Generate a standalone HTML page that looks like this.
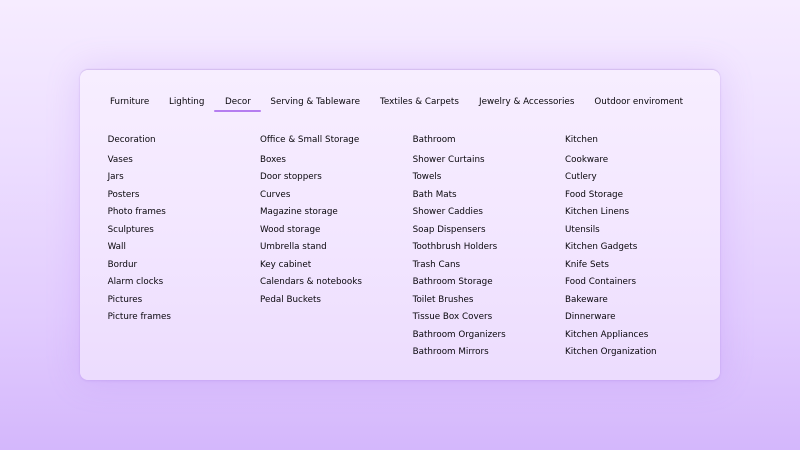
<!DOCTYPE html>
<html><head><meta charset="utf-8">
<style>
html,body{margin:0;padding:0}
body{width:800px;height:450px;overflow:hidden;position:relative;background:linear-gradient(180deg,#f6ecff 0%,#eee0ff 30%,#e2ccfe 70%,#d4b7fc 100%);font-family:"DejaVu Sans",sans-serif;font-size:8.75px;color:#08060b}
.card{position:absolute;left:80px;top:70px;width:640px;height:310px;box-sizing:border-box;border-radius:8px;background:linear-gradient(180deg,#f7eeff 0%,#f3e7ff 50%,#ecdcfe 100%);box-shadow:0 -1px 1px rgba(165,130,210,.3),0 1px 2px rgba(165,120,225,.25),0 0 34px rgba(170,110,240,.22)}
.t{position:absolute;white-space:nowrap;line-height:12px}
.u{position:absolute;left:214px;top:110px;width:46.5px;height:2.4px;background:#b57df0;border-radius:1px}
.c{position:absolute;top:133.6px;white-space:nowrap}
.c div{height:17.5px;line-height:12px}
.c div:first-child{height:20px}
</style></head><body>
<div class="card"></div>
<div class="t" style="left:110px;top:95.6px">Furniture</div>
<div class="t" style="left:169px;top:95.6px">Lighting</div>
<div class="t" style="left:225px;top:95.6px">Decor</div>
<div class="t" style="left:270.4px;top:95.6px">Serving &amp; Tableware</div>
<div class="t" style="left:380px;top:95.6px">Textiles &amp; Carpets</div>
<div class="t" style="left:479px;top:95.6px">Jewelry &amp; Accessories</div>
<div class="t" style="left:594.4px;top:95.6px">Outdoor enviroment</div>
<div class="u"></div>
<div class="c" style="left:107.6px"><div>Decoration</div><div>Vases</div><div>Jars</div><div>Posters</div><div>Photo frames</div><div>Sculptures</div><div>Wall</div><div>Bordur</div><div>Alarm clocks</div><div>Pictures</div><div>Picture frames</div></div>
<div class="c" style="left:260px"><div>Office &amp; Small Storage</div><div>Boxes</div><div>Door stoppers</div><div>Curves</div><div>Magazine storage</div><div>Wood storage</div><div>Umbrella stand</div><div>Key cabinet</div><div>Calendars &amp; notebooks</div><div>Pedal Buckets</div></div>
<div class="c" style="left:412.6px"><div>Bathroom</div><div>Shower Curtains</div><div>Towels</div><div>Bath Mats</div><div>Shower Caddies</div><div>Soap Dispensers</div><div>Toothbrush Holders</div><div>Trash Cans</div><div>Bathroom Storage</div><div>Toilet Brushes</div><div>Tissue Box Covers</div><div>Bathroom Organizers</div><div>Bathroom Mirrors</div></div>
<div class="c" style="left:565px"><div>Kitchen</div><div>Cookware</div><div>Cutlery</div><div>Food Storage</div><div>Kitchen Linens</div><div>Utensils</div><div>Kitchen Gadgets</div><div>Knife Sets</div><div>Food Containers</div><div>Bakeware</div><div>Dinnerware</div><div>Kitchen Appliances</div><div>Kitchen Organization</div></div>
</body></html>
